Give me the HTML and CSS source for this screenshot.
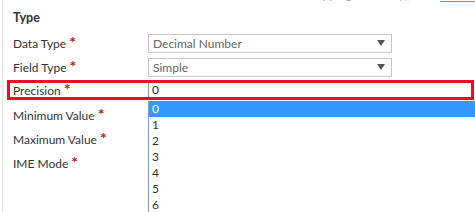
FILE: index.html
```html
<!DOCTYPE html>
<html>
<head>
<meta charset="utf-8">
<link rel="stylesheet" href="styles.css">
</head>
<body>
<div class="panel">
  <div class="topline">
    <span class="ghost g1">mapping</span><span class="ghost g2">only),</span><span class="ghost-link"></span>
  </div>
  <div class="heading">Type</div>
  <div class="row">
    <div class="label">Data Type<span class="req">*</span></div>
    <div class="select"><span>Decimal Number</span><span class="arrow"></span></div>
  </div>
  <div class="row">
    <div class="label">Field Type<span class="req">*</span></div>
    <div class="select"><span>Simple</span><span class="arrow"></span></div>
  </div>
  <div class="row row-hl">
    <div class="label">Precision<span class="req">*</span></div>
    <div class="input">0</div>
    <ul class="dropdown">
      <li class="sel">0</li>
      <li>1</li>
      <li>2</li>
      <li>3</li>
      <li>4</li>
      <li>5</li>
      <li>6</li>
    </ul>
  </div>
  <div class="row">
    <div class="label">Minimum Value<span class="req">*</span></div>
  </div>
  <div class="row">
    <div class="label">Maximum Value<span class="req">*</span></div>
  </div>
  <div class="row">
    <div class="label">IME Mode<span class="req">*</span></div>
  </div>
</div>
</body>
</html>
```
FILE: styles.css
```css
html, body {
  margin: 0;
  padding: 0;
  background: #fff;
  overflow: hidden;
}
body {
  width: 475px;
  height: 212px;
  font-family: Lato, "Open Sans", sans-serif;
  font-size: 12px;
  color: #333;
}
.panel {
  margin-left: 2px;
  border-left: 1px solid #e3e3e3;
  padding-left: 4px;
  height: 212px;
  box-sizing: border-box;
}
.topline {
  position: relative;
  height: 4px;
  overflow: hidden;
}
.ghost {
  position: absolute;
  top: -13px;
  font-size: 12px;
  color: #aaa;
}
.g1 { left: 300px; }
.g2 { left: 375px; }
.ghost-link {
  position: absolute;
  left: 433px;
  top: 1px;
  width: 40px;
  height: 1px;
  background: #6b95c0;
}
.heading {
  font-weight: bold;
  font-size: 12.5px;
  padding-left: 6px;
  height: 27px;
  line-height: 27px;
}
.row {
  position: relative;
  display: flex;
  align-items: center;
  height: 24px;
  padding-left: 6px;
}
.label {
  width: 135px;
  flex: none;
  white-space: nowrap;
}
.req {
  color: #a4262c;
  margin-left: 3px;
  font-size: 16px;
  font-weight: bold;
  line-height: 12px;
  position: relative;
  top: 0;
}
.select {
  box-sizing: border-box;
  width: 244px;
  height: 19px;
  border: 1px solid #c8c8c8;
  display: flex;
  align-items: center;
  justify-content: space-between;
  padding: 0 6px 0 4px;
  color: #666;
}
.arrow {
  width: 0;
  height: 0;
  border-left: 4px solid transparent;
  border-right: 4px solid transparent;
  border-top: 6px solid #555;
}
.row-hl {
  margin-top: 1px;
  margin-bottom: 3px;
  height: 20px;
  box-sizing: border-box;
  border: 3px solid #e0141e;
  width: 467px;
  padding-left: 3px;
}
.input {
  align-self: stretch;
  border-left: 1px solid #7a9cc4;
  padding-left: 3px;
  line-height: 14px;
  flex: 1;
  color: #222;
}
.dropdown {
  position: absolute;
  left: 138px;
  top: 18px;
  width: 340px;
  margin: 0;
  padding: 0;
  list-style: none;
  border-left: 1px solid #7a9cc4;
  background: #fff;
  z-index: 2;
}
.dropdown li {
  height: 16px;
  line-height: 16px;
  padding-left: 3px;
  color: #333;
}
.dropdown li.sel {
  background: #3399ff;
  color: #fff;
}
```
